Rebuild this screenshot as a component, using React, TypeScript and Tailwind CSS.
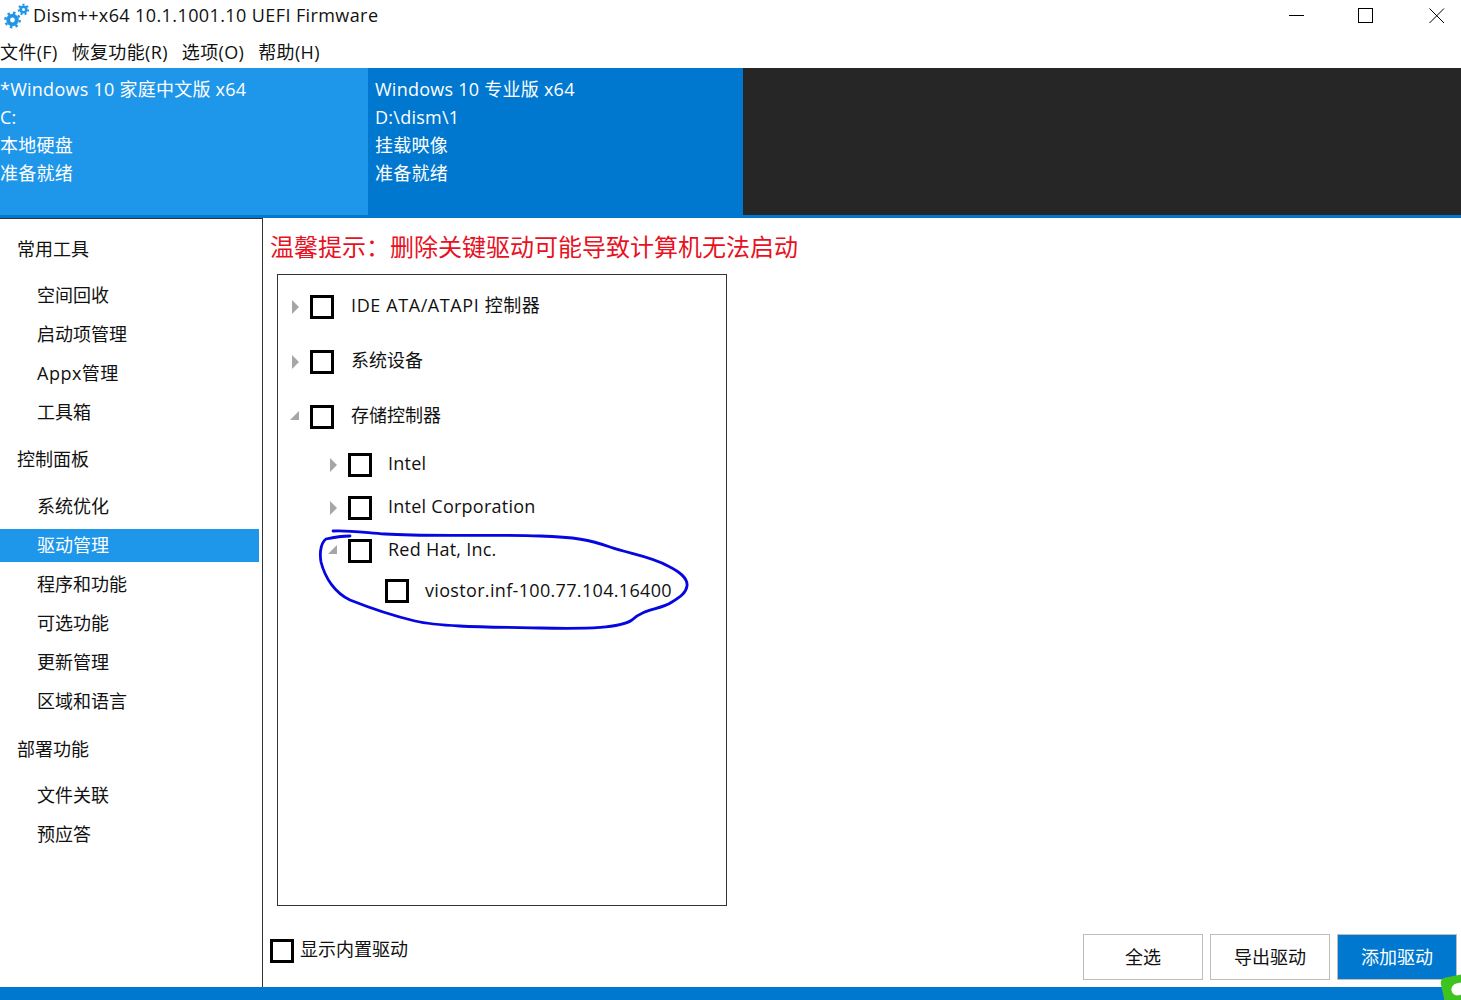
const font = "font-['Open_Sans','Noto_Sans_CJK_SC',sans-serif]";

const groups = [
  { name: "常用工具", items: ["空间回收", "启动项管理", "Appx管理", "工具箱"], cls: "mb-[4px]", list: "mt-[4px]" },
  { name: "控制面板", items: ["系统优化", "驱动管理", "程序和功能", "可选功能", "更新管理", "区域和语言"], cls: "mb-[5px]", list: "mt-[5px]" },
  { name: "部署功能", items: ["文件关联", "预应答"], cls: "mb-[4px]", list: "mt-[4px]" },
];

function Gears() {
  return (
    <svg width="26" height="26" viewBox="0 0 26 26" className="shrink-0">
      <g fill="none" stroke="#2196e6">
        <circle cx="9.5" cy="17" r="4.3" strokeWidth="3.8" />
        <circle cx="9.5" cy="17" r="7.2" strokeWidth="2.4" strokeDasharray="2.5 3.2" />
        <circle cx="20.5" cy="6.5" r="2.8" strokeWidth="2.6" />
        <circle cx="20.5" cy="6.5" r="4.8" strokeWidth="2" strokeDasharray="2 2.2" />
      </g>
    </svg>
  );
}

function Box() {
  return <div className="w-6 h-6 border-[3px] border-black bg-white shrink-0" />;
}

function Arrow({ open }: { open?: boolean }) {
  return (
    <svg width="10" height="14" viewBox="0 0 10 14" className="shrink-0">
      {open ? <path d="M0 10 L9 10 L9 1 Z" fill="#a6a6a6" /> : <path d="M2 0 L9 7 L2 14 Z" fill="#a6a6a6" />}
    </svg>
  );
}

function TreeRow({ label, indent, h, open, noArrow, track, gap, shift }: { label: string; indent: string; h: string; open?: boolean; noArrow?: boolean; track?: string; gap?: string; shift?: string }) {
  return (
    <div className={`flex items-center ${indent} ${h}`}>
      <div className="w-[20px] shrink-0">{noArrow ? null : <Arrow open={open} />}</div>
      <Box />
      <span className={`${gap ?? "ml-[16px]"} text-[18px] leading-none text-[#111] ${shift ?? "-translate-y-[2px]"} whitespace-nowrap ${track ?? ""}`}>{label}</span>
    </div>
  );
}

function Card({ lines, active }: { lines: string[]; active?: boolean }) {
  return (
    <div className={`h-full pt-[7px] text-[18px] leading-[28px] tracking-[0.25px] text-white ${active ? "w-[368px] bg-[#1e96ea]" : "w-[375px] pl-[7px]"}`}>
      {lines.map((l) => (
        <div key={l} className="whitespace-nowrap">{l}</div>
      ))}
    </div>
  );
}

export default function App() {
  return (
    <div className={`relative w-[1461px] h-[1000px] overflow-hidden bg-white flex flex-col ${font}`}>
      <div className="h-[32px] flex items-center pl-[3px] gap-[4px] text-[18px] tracking-[0.4px] text-[#111]">
        <Gears />
        <span className="whitespace-nowrap -translate-y-[1px]">Dism++x64 10.1.1001.10 UEFI Firmware</span>
        <div className="ml-auto flex items-center pr-[16px]">
          <svg width="16" height="16" viewBox="0 0 16 16" className="mr-[53px]"><path d="M0 7.5 H15" stroke="#000" /></svg>
          <svg width="16" height="16" viewBox="0 0 16 16" className="mr-[55px]"><rect x="0.5" y="0.5" width="14" height="14" fill="none" stroke="#000" /></svg>
          <svg width="16" height="16" viewBox="0 0 16 16"><path d="M0.5 0.5 L15 15 M15 0.5 L0.5 15" stroke="#000" /></svg>
        </div>
      </div>
      <div className="h-[36px] pt-[4px] flex items-center gap-[14px] text-[18px] tracking-[0.35px] text-[#111]">
        <span>文件(F)</span>
        <span>恢复功能(R)</span>
        <span>选项(O)</span>
        <span>帮助(H)</span>
      </div>
      <div className="h-[150px] shrink-0 flex bg-[#262626] border-b-[3px] border-[#0078d0]">
        <div className="flex bg-[#0078d0]">
          <Card active lines={["*Windows 10 家庭中文版 x64", "C:", "本地硬盘", "准备就绪"]} />
          <Card lines={["Windows 10 专业版 x64", "D:\\dism\\1", "挂载映像", "准备就绪"]} />
        </div>
      </div>
      <div className="flex flex-1 min-h-0">
        <div className="w-[263px] shrink-0 border-r border-t border-[#333] pt-[7px] text-[18px] text-[#111]">
          {groups.map((g) => (
            <div key={g.name} className={g.cls}>
              <div className="h-[46px] pl-[17px] flex items-center">{g.name}</div>
              <div className={g.list}>
                {g.items.map((it) => (
                  <div key={it} className="h-[39px] py-[3px]">
                    <div
                      className={`h-[33px] w-[259px] pl-[37px] flex items-center ${it === "驱动管理" ? "bg-[#1e96ea] text-white" : ""} ${it === "Appx管理" ? "tracking-[0.5px]" : ""}`}
                    >
                      {it}
                    </div>
                  </div>
                ))}
              </div>
            </div>
          ))}
        </div>
        <div className="flex-1 flex flex-col pl-[7px]">
          <div className="h-[56px] pt-[2px] flex items-center text-[24px] text-[#e81123] whitespace-nowrap">
            温馨提示：删除关键驱动可能导致计算机无法启动
          </div>
          <div className="ml-[7px] w-[450px] h-[632px] shrink-0 border border-[#333] pt-[4px]">
            <TreeRow label="IDE ATA/ATAPI 控制器" indent="pl-[12px]" h="h-[55px]" track="tracking-[0.6px]" gap="ml-[17px]" />
            <TreeRow label="系统设备" indent="pl-[12px]" h="h-[55px]" gap="ml-[17px]" />
            <TreeRow label="存储控制器" indent="pl-[12px]" h="h-[55px]" gap="ml-[17px]" open />
            <div className="-mt-[1px]" />
            <TreeRow label="Intel" indent="pl-[50px]" h="h-[43px]" track="tracking-[0.25px]" />
            <TreeRow label="Intel Corporation" indent="pl-[50px]" h="h-[43px]" track="tracking-[0.25px]" />
            <TreeRow label="Red Hat, Inc." indent="pl-[50px]" h="h-[43px]" track="tracking-[0.25px]" open />
            <TreeRow label="viostor.inf-100.77.104.16400" indent="pl-[87px]" h="h-[38px]" track="tracking-[0.33px]" shift="-translate-y-[1px]" noArrow />
          </div>
          <div className="flex-1 flex items-start justify-between pr-[4px]">
            <div className="mt-[31px] flex items-center gap-[6px] text-[18px] text-[#111]">
              <Box />
              <span className="-translate-y-[1px]">显示内置驱动</span>
            </div>
            <div className="mt-[28px] flex gap-[7px] text-[18px]">
              <button className="w-[120px] h-[46px] border border-[#bdbdbd] bg-white text-[#111]">全选</button>
              <button className="w-[120px] h-[46px] border border-[#bdbdbd] bg-white text-[#111]">导出驱动</button>
              <button className="w-[120px] h-[46px] border border-[#bdbdbd] bg-[#0078d0] text-white">添加驱动</button>
            </div>
          </div>
        </div>
      </div>
      <div className="h-[13px] shrink-0 bg-[#0078d0]" />

      {/* hand drawn circle over the tree */}
      <svg className="absolute left-0 top-0 pointer-events-none" width="1461" height="1000" fill="none">
        <path
          d="M333 531 C345 530 360 532 385 534 C430 537 490 534 540 536 C575 537 590 540 610 547 C630 554 650 556 668 566 C680 572 688 578 687 586 C686 593 680 597 672 602 C660 610 645 608 632 620 C620 628 590 629 540 628 C490 627 440 627 415 621 C390 615 365 606 350 600 C335 593 325 578 321 562 C319 550 322 542 326 539 C335 537 342 536 350 536"
          stroke="#0606e0"
          strokeWidth="2.8"
          strokeLinecap="round"
        />
      </svg>
      <div className="absolute left-[1443px] top-[975px] w-[34px] h-[34px] rounded-[5px] bg-[#3fc31f] -rotate-12">
        <div className="absolute left-[9px] top-[8px] w-[20px] h-[12px] rounded-full bg-white" />
      </div>
    </div>
  );
}
